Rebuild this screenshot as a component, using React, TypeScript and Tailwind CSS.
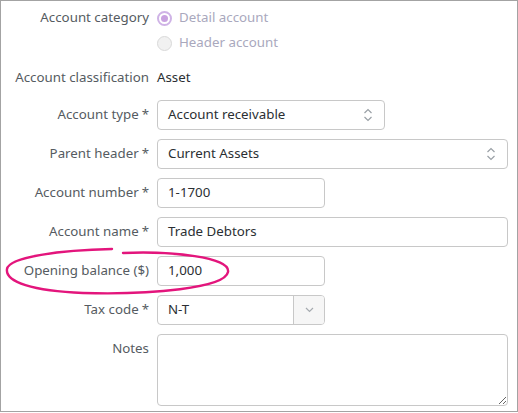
import React from 'react';

const font = { fontFamily: '"Noto Sans", "Open Sans", Arial, sans-serif' };

function Label({ text, required, top }: { text: string; required?: boolean; top?: boolean }) {
  return (
    <div
      className={`flex justify-end text-right text-[13.3px] text-[#555b61] ${top ? 'items-start pt-[5px]' : 'items-center'}`}
    >
      <span>
        {text}
        {required && <span className="ml-[3px]">*</span>}
      </span>
    </div>
  );
}

function UpDown() {
  return (
    <svg width="10" height="14" viewBox="0 0 10 14" fill="none" stroke="#9aa0a6" strokeWidth="1.2">
      <path d="M1.5 5 L5 1.5 L8.5 5" />
      <path d="M1.5 9 L5 12.5 L8.5 9" />
    </svg>
  );
}

function Box({ value, width, select }: { value: string; width: string; select?: boolean }) {
  return (
    <div
      className={`${width} flex h-[30px] items-center justify-between rounded-[4px] border border-[#c8c8c8] bg-white pl-[10px] pr-[11px] text-[13.3px] text-[#2b2f33]`}
    >
      <span>{value}</span>
      {select && <UpDown />}
    </div>
  );
}

export default function App() {
  return (
    <div className="h-[412px] w-[518px] overflow-hidden border border-[#a3a3a3] bg-white" style={font}>
      <div className="relative grid grid-cols-[148px_1fr] gap-x-[8px] pt-[5px]">
        {/* category */}
        <div className="flex h-[24px] items-center justify-end text-[13.3px] text-[#555b61]">Account category</div>
        <div className="flex flex-col">
          <div className="flex h-[24px] items-center gap-[7px] text-[13.3px] text-[#a9a8bd]">
            <span className="flex h-[15px] w-[15px] items-center justify-center rounded-full border-2 border-[#cfb3e6] bg-white">
              <span className="h-[7px] w-[7px] rounded-full bg-[#c9a2e0]" />
            </span>
            Detail account
          </div>
          <div className="mt-[1px] flex h-[24px] items-center gap-[7px] text-[13.3px] text-[#a9a8bd]">
            <span className="h-[15px] w-[15px] rounded-full border border-[#d9d9d9] bg-[#f1f1f1]" />
            Header account
          </div>
        </div>

        <div className="mt-[11px] flex h-[24px] items-center justify-end text-[13.3px] text-[#555b61]">
          Account classification
        </div>
        <div className="mt-[11px] flex h-[24px] items-center text-[13.3px] text-[#2b2f33]">Asset</div>

        <div className="col-span-2 mt-[10px] grid grid-cols-[148px_1fr] gap-x-[8px] gap-y-[9px]">
          <Label text="Account type" required />
          <Box value="Account receivable" width="w-[228px]" select />

          <Label text="Parent header" required />
          <Box value="Current Assets" width="w-[351px]" select />

          <Label text="Account number" required />
          <Box value="1-1700" width="w-[168px]" />

          <Label text="Account name" required />
          <Box value="Trade Debtors" width="w-[351px]" />

          <Label text="Opening balance ($)" />
          <Box value="1,000" width="w-[168px]" />

          <Label text="Tax code" required />
          <div className="flex h-[30px] w-[168px] overflow-hidden rounded-[4px] border border-[#c8c8c8] text-[13.3px] text-[#2b2f33]">
            <div className="flex flex-1 items-center pl-[10px]">N-T</div>
            <div className="flex w-[31px] items-center justify-center border-l border-[#c8c8c8] bg-[#f6f6f6]">
              <svg width="9" height="6" viewBox="0 0 9 6" fill="none" stroke="#a6abb0" strokeWidth="1.2">
                <path d="M1 1 L4.5 4.5 L8 1" />
              </svg>
            </div>
          </div>

          <Label text="Notes" top />
          <textarea
            readOnly
            className="h-[72px] w-[351px] rounded-[4px] border border-[#c8c8c8] bg-white text-[13.3px] outline-none"
          />
        </div>

        {/* hand-drawn highlight */}
        <svg
          className="pointer-events-none absolute left-0 top-0"
          width="518"
          height="412"
          viewBox="0 0 518 412"
          fill="none"
        >
          <path
            d="M122 252 C170 250, 230 256, 227 271 C224 287, 150 294, 82 292 C32 290, 4 281, 6 268 C8 256, 60 249, 111 248"
            stroke="#e3157c"
            strokeWidth="2.4"
            strokeLinecap="round"
          />
        </svg>
      </div>
    </div>
  );
}
